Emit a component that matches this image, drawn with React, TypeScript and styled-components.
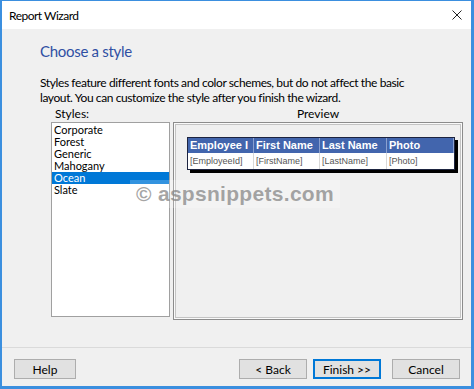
import React from 'react'
import styled, { createGlobalStyle } from 'styled-components'

const GlobalStyle = createGlobalStyle`
  html, body {
    margin: 0;
    padding: 0;
    background: #fff;
  }
  body {
    font-family: Lato, 'Noto Sans', 'Liberation Sans', sans-serif;
    font-size: 12px;
    color: #000;
  }
`

const Window = styled.div`
  position: relative;
  width: 474px;
  height: 389px;
  box-sizing: border-box;
  border: solid #3b8fdf;
  border-width: 1px 3px 3px 2px;
  background: #f0f0f0;
  display: flex;
  flex-direction: column;
  overflow: hidden;
`

const TitleBar = styled.div`
  height: 28px;
  flex-shrink: 0;
  background: #fff;
  display: flex;
  align-items: center;
  justify-content: space-between;
  padding: 0 9px 0 7px;
`

const TitleText = styled.span`
  font-size: 12px;
  letter-spacing: -0.5px;
  color: #000;
`

const Body = styled.div`
  flex: 1;
  display: flex;
  flex-direction: column;
`

const Heading = styled.div`
  margin: 12px 0 0 38px;
  font-size: 15px;
  letter-spacing: -0.3px;
  line-height: 20px;
  color: #2f4fa3;
`

const Description = styled.div`
  margin: 14px 0 0 38px;
  line-height: 15px;
  letter-spacing: -0.4px;
  white-space: nowrap;
`

const Main = styled.div`
  margin: 2px 0 0 49px;
  display: grid;
  grid-template-columns: 119px 290px;
  column-gap: 3px;
  align-items: start;
`

const Column = styled.div`
  display: flex;
  flex-direction: column;
`

const Label = styled.div<{ $center?: boolean }>`
  height: 14px;
  line-height: 14px;
  margin-bottom: 1px;
  padding-left: ${(p) => (p.$center ? 0 : 4)}px;
  text-align: ${(p) => (p.$center ? 'center' : 'left')};
`

const ListBox = styled.div`
  height: 195px;
  box-sizing: border-box;
  background: #fff;
  border: 1px solid #a0a0a0;
  padding-top: 1px;
`

const ListItem = styled.div<{ $selected?: boolean }>`
  height: 12px;
  line-height: 12px;
  font-size: 11px;
  padding-left: 2px;
  background: ${(p) => (p.$selected ? '#0078d7' : 'transparent')};
  color: ${(p) => (p.$selected ? '#fff' : '#000')};
`

const PreviewBox = styled.div`
  height: 198px;
  box-sizing: border-box;
  border: 1px solid #8c8c8c;
  box-shadow: inset 0 0 0 1px #fafafa, inset 0 0 0 2px #c4c4c4;
  padding: 14px 6px 0 13px;
`

const Table = styled.div`
  display: grid;
  grid-template-columns: 66px 66px 67px 1fr;
  width: 266px;
  border: 1px solid #1d2440;
  box-shadow: 3px 3px 0 #000;
  background: #fff;
`

const HeadCell = styled.div`
  height: 15px;
  line-height: 15px;
  padding-left: 2px;
  background: #4265ad;
  color: #fff;
  font-family: 'Liberation Sans', Arial, sans-serif;
  font-weight: bold;
  font-size: 11px;
  white-space: nowrap;
  overflow: hidden;
  border-right: 1px solid #8aa0cf;
  &:last-child {
    border-right: none;
  }
`

const DataCell = styled.div`
  height: 16px;
  line-height: 16px;
  padding-left: 2px;
  color: #555;
  font-family: 'Liberation Sans', Arial, sans-serif;
  font-size: 9px;
  white-space: nowrap;
  overflow: hidden;
  border-right: 1px solid #d8d8d8;
  &:last-child {
    border-right: none;
  }
`

const Separator = styled.div`
  margin-top: 27px;
  height: 1px;
  background: #dadada;
`

const Footer = styled.div`
  display: flex;
  align-items: center;
  gap: 6px;
  padding: 11px 11px 0 12px;
`

const Button = styled.button<{ $primary?: boolean; $width?: number; $push?: number }>`
  width: ${(p) => p.$width ?? 68}px;
  height: 20px;
  box-sizing: border-box;
  margin: 0;
  margin-left: ${(p) => p.$push ?? 0}px;
  padding: 0;
  font-family: Lato, 'Noto Sans', 'Liberation Sans', sans-serif;
  font-size: 12px;
  color: #000;
  background: #e1e1e1;
  border: 1px solid ${(p) => (p.$primary ? '#0078d7' : '#adadad')};
  box-shadow: ${(p) => (p.$primary ? 'inset 0 0 0 1px #0078d7' : 'none')};
`

const Spacer = styled.div`
  flex: 1;
`

const Watermark = styled.div`
  position: absolute;
  left: 128px;
  top: 179px;
  padding: 0 6px;
  font-family: 'Liberation Sans', Arial, sans-serif;
  font-weight: bold;
  font-size: 21px;
  line-height: 28px;
  color: rgba(135, 135, 135, 0.75);
  background: rgba(255, 255, 255, 0.2);
  letter-spacing: 0.3px;
`

const styles = ['Corporate', 'Forest', 'Generic', 'Mahogany', 'Ocean', 'Slate']
const columns = [
  ['Employee I', '[EmployeeId]'],
  ['First Name', '[FirstName]'],
  ['Last Name', '[LastName]'],
  ['Photo', '[Photo]'],
]

export default function App() {
  return (
    <>
      <GlobalStyle />
      <Window>
        <TitleBar>
          <TitleText>Report Wizard</TitleText>
          <svg width="10" height="10" viewBox="0 0 10 10">
            <path d="M0.5 0.5 L9.5 9.5 M9.5 0.5 L0.5 9.5" stroke="#222" strokeWidth="1" />
          </svg>
        </TitleBar>
        <Body>
          <Heading>Choose a style</Heading>
          <Description>
            Styles feature different fonts and color schemes, but do not affect the basic
            <br />
            layout. You can customize the style after you finish the wizard.
          </Description>
          <Main>
            <Column>
              <Label>Styles:</Label>
              <ListBox>
                {styles.map((s) => (
                  <ListItem key={s} $selected={s === 'Ocean'}>
                    {s}
                  </ListItem>
                ))}
              </ListBox>
            </Column>
            <Column>
              <Label $center>Preview</Label>
              <PreviewBox>
                <Table>
                  {columns.map(([h]) => (
                    <HeadCell key={h}>{h}</HeadCell>
                  ))}
                  {columns.map(([h, d]) => (
                    <DataCell key={h}>{d}</DataCell>
                  ))}
                </Table>
              </PreviewBox>
            </Column>
          </Main>
          <Separator />
          <Footer>
            <Button $width={62}>Help</Button>
            <Spacer />
            <Button>&lt; Back</Button>
            <Button $primary>Finish &gt;&gt;</Button>
            <Button $push={5}>Cancel</Button>
          </Footer>
        </Body>
        <Watermark>© aspsnippets.com</Watermark>
      </Window>
    </>
  )
}
